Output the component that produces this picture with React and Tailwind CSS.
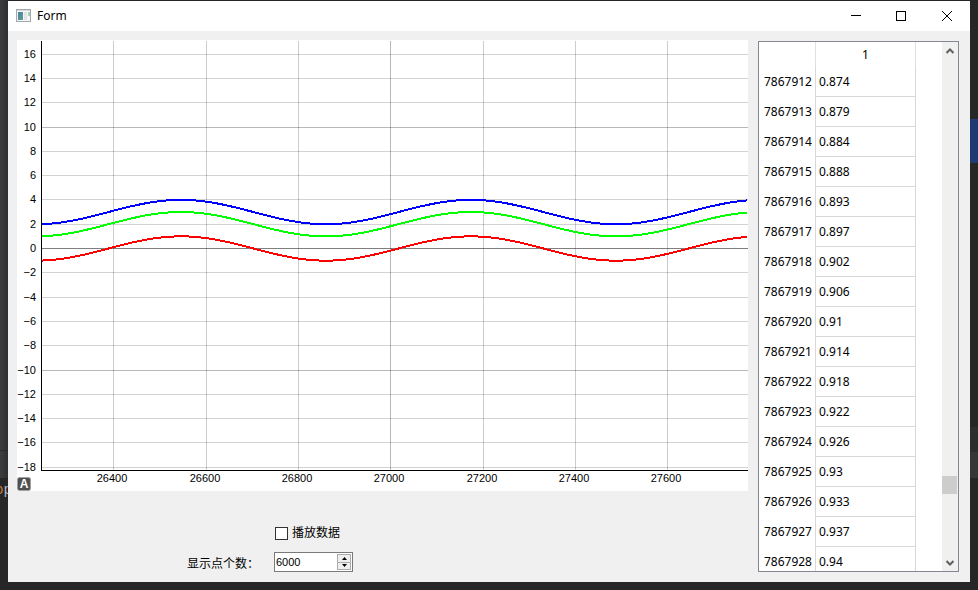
const yTicks = [16, 14, 12, 10, 8, 6, 4, 2, 0, -2, -4, -6, -8, -10, -12, -14, -16, -18];
const xTicks = [26400, 26600, 26800, 27000, 27200, 27400, 27600];

const values = [
  "0.874", "0.879", "0.884", "0.888", "0.893", "0.897", "0.902", "0.906", "0.91",
  "0.914", "0.918", "0.922", "0.926", "0.93", "0.933", "0.937", "0.94",
];
const rows = values.map((value, i) => ({ id: 7867912 + i, value }));

const series = [
  { color: "#0000ff", offset: 3 },
  { color: "#00ff00", offset: 2 },
  { color: "#ff0000", offset: 0 },
];

const toX = (v) => Math.round(96.4 + ((v - 26400) * 554) / 1200);
const toY = (v) => Math.round(208 - v * 12.15);

function wave(offset) {
  const points = [];
  for (let x = 25; x <= 730; x += 3) {
    const y = 208.5 - (offset + Math.cos(((x - 164) * 2 * Math.PI) / 290)) * 12.15;
    points.push(`${x},${y.toFixed(2)}`);
  }
  return points.join(" ");
}

function Plot() {
  return (
    <svg viewBox="0 0 731 451" className="block w-full bg-white" role="img" aria-label="Plot">
      <g shapeRendering="crispEdges">
        {yTicks.map((t) => (
          <line
            key={t}
            x1="25"
            x2="731"
            y1={toY(t) + 0.5}
            y2={toY(t) + 0.5}
            stroke={t === 0 ? "#7f7f7f" : t % 10 === 0 ? "#b8b8b8" : "#d2d2d2"}
          />
        ))}
        {xTicks.map((t) => (
          <line
            key={t}
            x1={toX(t) + 0.5}
            x2={toX(t) + 0.5}
            y1="1"
            y2="430"
            stroke="#000"
            strokeOpacity={t === 27000 ? 0.28 : 0.2}
          />
        ))}
        <path d="M24.5 1V430.5H731" fill="none" stroke="#000" />
        {series.map((s) => (
          <polyline key={s.color} points={wave(s.offset)} fill="none" stroke={s.color} strokeWidth="2" />
        ))}
      </g>
      <g className="font-['Liberation_Sans',sans-serif] text-[11px]">
        {yTicks.map((t) => (
          <text key={t} x="19" y={toY(t) + 4} textAnchor="end">
            {String(t).replace("-", "−")}
          </text>
        ))}
        {xTicks.map((t) => (
          <text key={t} x={toX(t) - 1} y="442" textAnchor="middle">
            {t}
          </text>
        ))}
      </g>
      <rect x="0" y="431" width="24" height="20" fill="#fff" />
      <rect x="0.5" y="437.5" width="13" height="13" rx="2" fill="#505050" stroke="#a0a0a0" />
      <text x="7" y="448" textAnchor="middle" fill="#fff" className="font-['Liberation_Sans',sans-serif] text-[12px] font-bold">
        A
      </text>
    </svg>
  );
}

function TitleBar() {
  return (
    <header className="flex h-[30px] shrink-0 items-center bg-white pl-2">
      <svg width="16" height="14" viewBox="0 0 16 14" aria-hidden="true">
        <defs>
          <linearGradient id="pane" x1="0" y1="0" x2="1" y2="1">
            <stop offset="0" stopColor="#4d78a8" />
            <stop offset="1" stopColor="#5aa88a" />
          </linearGradient>
        </defs>
        <rect x="0.5" y="0.5" width="14" height="12" fill="#f6f6f6" stroke="#a3a8ad" />
        <rect x="1" y="1" width="13" height="1" fill="#d5d8da" />
        <rect x="2" y="3" width="5" height="8" fill="url(#pane)" />
        <rect x="8" y="3" width="3" height="8" fill="#e3e3e3" />
        <rect x="12" y="3" width="2" height="4" fill="#a5cdb8" />
      </svg>
      <h1 className="ml-[5px] flex-1 font-['Noto_Sans','Open_Sans',sans-serif] text-[12px]">Form</h1>
      <button aria-label="Minimize" className="flex h-full w-[45px] items-center justify-center">
        <svg width="10" height="10" stroke="#000" shapeRendering="crispEdges"><path d="M0 4.5H10" /></svg>
      </button>
      <button aria-label="Maximize" className="flex h-full w-[46px] items-center justify-center">
        <svg width="10" height="10" stroke="#000" fill="none" shapeRendering="crispEdges"><path d="M.5 .5H9.5V9.5H.5Z" /></svg>
      </button>
      <button aria-label="Close" className="flex h-full w-[46px] items-center justify-center">
        <svg width="10" height="10" stroke="#000"><path d="M0 0 10 10M10 0 0 10" /></svg>
      </button>
    </header>
  );
}

function Controls() {
  return (
    <div className="grid grid-cols-[257px_1fr] gap-y-[9px] pt-8 text-[12px]">
      <label className="col-start-2 flex h-5 items-center gap-1 pl-px">
        <input type="checkbox" className="size-[13px] appearance-none border border-[#333] bg-white checked:bg-[#333]" />
        播放数据
      </label>
      <label htmlFor="points" className="col-start-1 self-center pt-1 pl-[170px] leading-4">显示点个数：</label>
      <div className="flex h-5 w-[79px] border border-[#7a7a7a] bg-white">
        <input id="points" defaultValue="6000" className="w-0 flex-1 pl-px font-['Liberation_Sans',sans-serif] text-[11px] outline-none" />
        <div className="m-px flex w-[14px] flex-col gap-px bg-[#ababab] p-px">
          <button aria-label="Increase" className="flex flex-1 items-center justify-center bg-[#efefef]">
            <svg width="5" height="3"><path d="M0 3 2.5 0 5 3Z" /></svg>
          </button>
          <button aria-label="Decrease" className="flex flex-1 items-center justify-center bg-[#efefef]">
            <svg width="5" height="3"><path d="M0 0 2.5 3 5 0Z" /></svg>
          </button>
        </div>
      </div>
    </div>
  );
}

function DataTable() {
  return (
    <div className="mt-px flex w-[201px] shrink-0 border border-[#828790] bg-white">
      <div className="min-h-0 flex-1 overflow-hidden">
        <table className="w-[157px] table-fixed border-separate border-spacing-0 font-['Noto_Sans','Open_Sans',sans-serif] text-[12px]">
          <thead>
            <tr className="h-[25px]">
              <th className="w-14" />
              <th scope="col" className="border-x border-[#e0e0e0] p-0 font-normal">1</th>
            </tr>
          </thead>
          <tbody>
            {rows.map((r) => (
              <tr key={r.id} className="h-[30px]">
                <th scope="row" className="p-0 pr-[3px] text-right font-normal">{r.id}</th>
                <td className="border-r border-b border-l border-[#d8d8d8] p-0 pl-[3px]">{r.value}</td>
              </tr>
            ))}
          </tbody>
        </table>
      </div>
      <div className="flex w-4 flex-col bg-[#f0f0f0]">
        <button aria-label="Scroll up" className="flex h-[17px] items-center justify-center">
          <svg width="8" height="6" fill="none" stroke="#606060" strokeWidth="2"><path d="M.5 5 4 1.5 7.5 5" /></svg>
        </button>
        <div className="flex w-full flex-1 flex-col">
          <div className="grow-[417]" />
          <div className="mr-px h-[18px] bg-[#cdcdcd]" />
          <div className="grow-[60]" />
        </div>
        <button aria-label="Scroll down" className="flex h-[17px] items-center justify-center">
          <svg width="8" height="6" fill="none" stroke="#606060" strokeWidth="2"><path d="M.5 1 4 4.5 7.5 1" /></svg>
        </button>
      </div>
    </div>
  );
}

export default function App() {
  return (
    <div className="flex h-screen overflow-hidden bg-[#262626] font-['Open_Sans','Noto_Sans_CJK_SC',sans-serif] text-black">
      <div className="flex w-2 shrink-0 flex-col overflow-hidden">
        <div className="h-[451px] border-b border-[#2b2b2b] bg-linear-to-r from-[#3b3d3f] to-[#2e2f30]" />
        <div className="h-[27px] bg-linear-to-r from-[#3b3d3f] to-[#2e2f30]" />
        <span className="-ml-[5px] pt-0.5 font-['Liberation_Mono',monospace] text-[14px] text-[#a9b7c6]">
          <span className="text-[#cc7832]">o</span>p
        </span>
      </div>
      <main className="mt-px mb-2 flex min-w-0 flex-1 flex-col bg-[#f0f0f0]">
        <TitleBar />
        <div className="flex min-h-0 flex-1 gap-[10px] pt-[9px] pr-[11px] pb-[10px] pl-[9px]">
          <section className="min-w-0 flex-1">
            <Plot />
            <Controls />
          </section>
          <DataTable />
        </div>
      </main>
      <div className="flex w-2 shrink-0 flex-col">
        <div className="h-[119px]" />
        <div className="h-11 bg-[#1f3a72]" />
        <div className="h-[264px]" />
        <div className="h-[25px] bg-[#2b2d2f]" />
        <div className="h-[26px] bg-[#343638]" />
      </div>
    </div>
  );
}
